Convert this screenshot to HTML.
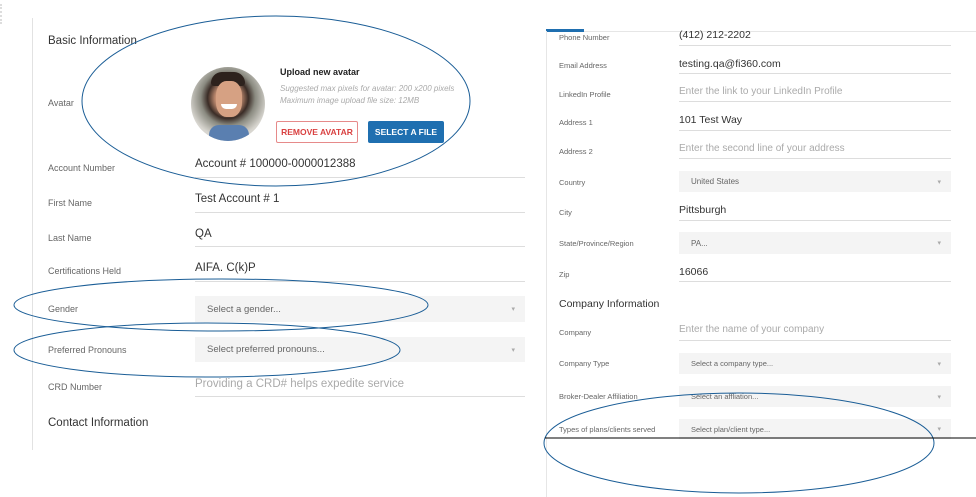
<!DOCTYPE html>
<html><head><meta charset="utf-8"><style>
*{margin:0;padding:0;box-sizing:border-box}
body{width:976px;height:497px;background:#fff;position:relative;overflow:hidden;font-family:"Liberation Sans",sans-serif}
.a{position:absolute;white-space:nowrap}
.l{font-size:9px;color:#666}
.v{font-size:11.5px;color:#333}
.p{font-size:11.5px;color:#aaa}
.u{position:absolute;height:1px;background:#ddd}
.s{position:absolute;background:#f4f4f4;font-size:9.5px;color:#666;padding-left:12px;display:flex;align-items:center}
.s:after{content:"▾";position:absolute;right:10px;font-size:7px;color:#aaa}
.h{font-size:11.5px;color:#333}
</style></head><body>
<div class="a" style="left:32px;top:18px;width:1px;height:432px;background:#e2e2e2"></div>
<div class="a" style="left:0;top:4px;width:2px;height:20px;border-left:2px dotted #ddd"></div>
<div class="a h" style="left:48px;top:35px">Basic Information</div>
<div class="a l" style="left:48px;top:98px">Avatar</div>
<div class="a" style="left:191px;top:67px;width:74px;height:74px;border-radius:50%;background:radial-gradient(circle at 50% 42%,#d9a98c 0,#c48e72 22%,#3a2c26 36%,#8a8a80 48%,#d8d6d0 70%);overflow:hidden">
<div style="position:absolute;left:18px;top:58px;width:40px;height:20px;background:#5a7fb0;border-radius:10px 10px 0 0"></div>
<div style="position:absolute;left:20px;top:5px;width:34px;height:14px;background:#2d221d;border-radius:14px 14px 4px 4px"></div>
<div style="position:absolute;left:25px;top:14px;width:26px;height:36px;background:#d6a183;border-radius:40%"></div>
<div style="position:absolute;left:30px;top:37px;width:16px;height:5px;background:#fff;border-radius:0 0 8px 8px"></div>
</div>
<div class="a" style="left:280px;top:67px;font-size:9px;font-weight:bold;color:#222">Upload new avatar</div>
<div class="a" style="left:280px;top:83px;font-size:8px;color:#aaa;font-style:italic;line-height:12px">Suggested max pixels for avatar: 200 x200 pixels<br>Maximum image upload file size: 12MB</div>
<div class="a" style="left:276px;top:121px;width:82px;height:22px;border:1px solid #e68a8a;border-radius:2px;color:#d94040;font-size:8.5px;font-weight:bold;display:flex;align-items:center;justify-content:center">REMOVE AVATAR</div>
<div class="a" style="left:368px;top:121px;width:76px;height:22px;background:#1f6fb0;border-radius:2px;color:#fff;font-size:8.5px;font-weight:bold;display:flex;align-items:center;justify-content:center">SELECT A FILE</div>

<div class="a l" style="left:48px;top:163px">Account Number</div><div class="a v" style="left:195px;top:158px">Account # 100000-0000012388</div><div class="u" style="left:195px;top:177px;width:330px"></div>
<div class="a l" style="left:48px;top:198px">First Name</div><div class="a v" style="left:195px;top:193px">Test Account # 1</div><div class="u" style="left:195px;top:212px;width:330px"></div>
<div class="a l" style="left:48px;top:233px">Last Name</div><div class="a v" style="left:195px;top:228px">QA</div><div class="u" style="left:195px;top:246px;width:330px"></div>
<div class="a l" style="left:48px;top:266px">Certifications Held</div><div class="a v" style="left:195px;top:262px">AIFA. C(k)P</div><div class="u" style="left:195px;top:281px;width:330px"></div>
<div class="a l" style="left:48px;top:304px">Gender</div><div class="s" style="left:195px;top:296px;width:330px;height:26px">Select a gender...</div>
<div class="a l" style="left:48px;top:345px">Preferred Pronouns</div><div class="s" style="left:195px;top:337px;width:330px;height:25px">Select preferred pronouns...</div>
<div class="a l" style="left:48px;top:382px">CRD Number</div><div class="a p" style="left:195px;top:378px">Providing a CRD# helps expedite service</div><div class="u" style="left:195px;top:396px;width:330px"></div>
<div class="a h" style="left:48px;top:417px">Contact Information</div>

<div class="a" style="left:546px;top:31px;width:430px;height:1px;background:#e6e6e6"></div>
<div class="a" style="left:546px;top:29px;width:38px;height:3px;background:#1f6fb0"></div>
<div class="a" style="left:546px;top:31px;width:1px;height:466px;background:#e6e6e6"></div>
<div class="a l" style="left:559px;top:33px;font-size:7.5px">Phone Number</div><div class="a v" style="left:679px;top:29px;font-size:10.5px">(412) 212-2202</div><div class="u" style="left:679px;top:45px;width:272px"></div>
<div class="a l" style="left:559px;top:61px;font-size:7.5px">Email Address</div><div class="a v" style="left:679px;top:58px;font-size:10.5px">testing.qa@fi360.com</div><div class="u" style="left:679px;top:73px;width:272px"></div>
<div class="a l" style="left:559px;top:90px;font-size:7.5px">LinkedIn Profile</div><div class="a p" style="left:679px;top:86px;font-size:10px">Enter the link to your LinkedIn Profile</div><div class="u" style="left:679px;top:101px;width:272px"></div>
<div class="a l" style="left:559px;top:118px;font-size:7.5px">Address 1</div><div class="a v" style="left:679px;top:114px;font-size:10.5px">101 Test Way</div><div class="u" style="left:679px;top:130px;width:272px"></div>
<div class="a l" style="left:559px;top:147px;font-size:7.5px">Address 2</div><div class="a p" style="left:679px;top:143px;font-size:10px">Enter the second line of your address</div><div class="u" style="left:679px;top:158px;width:272px"></div>
<div class="a l" style="left:559px;top:178px;font-size:7.5px">Country</div><div class="s" style="left:679px;top:171px;width:272px;height:21px;font-size:8px">United States</div>
<div class="a l" style="left:559px;top:208px;font-size:7.5px">City</div><div class="a v" style="left:679px;top:204px;font-size:10.5px">Pittsburgh</div><div class="u" style="left:679px;top:220px;width:272px"></div>
<div class="a l" style="left:559px;top:239px;font-size:7.5px">State/Province/Region</div><div class="s" style="left:679px;top:232px;width:272px;height:22px;font-size:8px">PA...</div>
<div class="a l" style="left:559px;top:270px;font-size:7.5px">Zip</div><div class="a v" style="left:679px;top:266px;font-size:10.5px">16066</div><div class="u" style="left:679px;top:281px;width:272px"></div>
<div class="a h" style="left:559px;top:298px;font-size:10.5px">Company Information</div>
<div class="a l" style="left:559px;top:328px;font-size:7.5px">Company</div><div class="a p" style="left:679px;top:324px;font-size:10px">Enter the name of your company</div><div class="u" style="left:679px;top:340px;width:272px"></div>
<div class="a l" style="left:559px;top:359px;font-size:7.5px">Company Type</div><div class="s" style="left:679px;top:353px;width:272px;height:21px;font-size:7.5px">Select a company type...</div>
<div class="a l" style="left:559px;top:392px;font-size:7.5px">Broker-Dealer Affiliation</div><div class="s" style="left:679px;top:386px;width:272px;height:21px;font-size:7.5px">Select an affliation...</div>
<div class="a l" style="left:559px;top:425px;font-size:7.5px">Types of plans/clients served</div><div class="s" style="left:679px;top:419px;width:272px;height:20px;font-size:7.5px">Select plan/client type...</div>

<svg class="a" style="left:0;top:0" width="976" height="497">
<g fill="none" stroke="#1a5d96" stroke-width="1">
<ellipse cx="276" cy="101" rx="194" ry="85"/>
<ellipse cx="221" cy="305" rx="207" ry="26"/>
<ellipse cx="207" cy="350" rx="193" ry="27"/>
<ellipse cx="739" cy="443" rx="195" ry="50"/>
</g>
<line x1="545" y1="438" x2="976" y2="438" stroke="#000" stroke-width="1"/>
</svg>
</body></html>
